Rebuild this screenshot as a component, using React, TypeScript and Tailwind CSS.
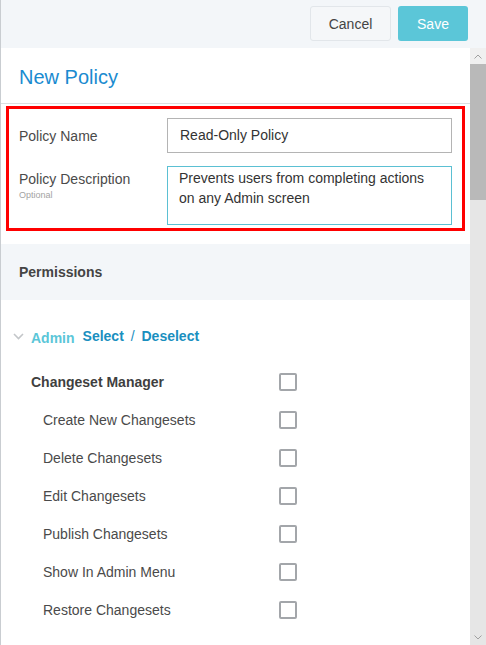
import React from "react";

const subItems = [
  "Create New Changesets",
  "Delete Changesets",
  "Edit Changesets",
  "Publish Changesets",
  "Show In Admin Menu",
  "Restore Changesets",
];

const Checkbox = () => (
  <span className="block w-[18px] h-[18px] border-2 border-[#a3a6aa] rounded-[2px] bg-white" />
);

export default function App() {
  return (
    <div
      className="w-[486px] h-[645px] flex flex-col border-l border-[#c9cdd1] bg-white overflow-hidden text-[14px] text-[#444]"
      style={{ fontFamily: '"Liberation Sans", Arial, sans-serif' }}
    >
      {/* Top action bar */}
      <div className="h-[48px] shrink-0 bg-[#f3f6f9] flex items-start justify-end gap-[7px] pt-[6px] pr-[18px]">
        <button className="w-[81px] h-[35px] pt-[2px] border border-[#e2e6ea] rounded-[3px] bg-[#f5f7f9] text-[#444]">
          Cancel
        </button>
        <button className="w-[70px] h-[35px] pt-[2px] rounded-[3px] bg-[#5bc6d8] text-white">
          Save
        </button>
      </div>

      <div className="flex flex-1 min-h-0">
        {/* Main content */}
        <div className="flex-1 min-w-0 flex flex-col">
          <div className="h-[56px] shrink-0 flex items-center pl-[18px] pt-[2px] border-b border-[#dcdfe2]">
            <h1 className="text-[20px] text-[#1a8bd0] leading-none">New Policy</h1>
          </div>

          <div className="ml-[5px] mr-[5px] mt-[2px] border-[3px] border-[#ff0000] pl-[10px] pr-[10px] pt-[9px] pb-[3px]">
            <div className="flex items-center h-[35px]">
              <label className="w-[148px] shrink-0 pt-[2px] text-[#4a4a4a]">Policy Name</label>
              <div className="flex-1 h-[35px] border border-[#b4b4b4] flex items-center px-[12px] text-[#333]">
                Read-Only Policy
              </div>
            </div>
            <div className="flex items-start mt-[13px]">
              <div className="w-[148px] shrink-0 pt-[5px]">
                <div className="text-[#4a4a4a] leading-[16px]">Policy Description</div>
                <div className="text-[9px] text-[#a3a3a3] leading-[10px] mt-[3px]">Optional</div>
              </div>
              <div className="flex-1 h-[59px] border border-[#5bc0d3] px-[11px] pt-[1px] text-[#333] leading-[20px]">
                Prevents users from completing actions on any Admin screen
              </div>
            </div>
          </div>

          <div className="mt-[13px] h-[56px] shrink-0 bg-[#f3f6f9] flex items-center pl-[18px]">
            <span className="font-bold text-[#444]">Permissions</span>
          </div>

          <div className="pt-[26px]">
            <div className="flex items-end h-[20px] pl-[12px]">
              <svg width="11" height="7" viewBox="0 0 11 7" className="mb-[6px] mr-[7px]">
                <path d="M1 1l4.5 4.5L10 1" fill="none" stroke="#c3c6c9" strokeWidth="1.6" />
              </svg>
              <span className="font-bold text-[#5bc6d8] leading-none mb-[1px]">Admin</span>
              <span className="ml-[8px] font-bold text-[#1a8fbf] leading-none mb-[3px]">
                Select <span className="mx-[3px] font-normal">/</span> Deselect
              </span>
            </div>

            <div className="mt-[17px]">
              <div className="h-[38px] flex items-center pl-[30px]">
                <span className="w-[248px] font-bold text-[#3f3f3f]">Changeset Manager</span>
                <Checkbox />
              </div>
              {subItems.map((item) => (
                <div key={item} className="h-[38px] flex items-center pl-[42px]">
                  <span className="w-[236px] text-[#4a4a4a]">{item}</span>
                  <Checkbox />
                </div>
              ))}
            </div>
          </div>
        </div>

        {/* Scrollbar */}
        <div className="w-[16px] shrink-0 bg-[#e6e6e6] flex flex-col">
          <div className="h-[16px] bg-[#f0f0f0] flex items-center justify-center">
            <svg width="8" height="5" viewBox="0 0 8 5">
              <path d="M0.5 4.5L4 1l3.5 3.5" fill="none" stroke="#a0a0a0" strokeWidth="1" />
            </svg>
          </div>
          <div className="h-[136px] bg-[#b9b9b9]" />
          <div className="flex-1" />
          <div className="h-[16px] flex items-center justify-center">
            <svg width="8" height="5" viewBox="0 0 8 5">
              <path d="M0.5 0.5L4 4l3.5-3.5" fill="none" stroke="#a0a0a0" strokeWidth="1" />
            </svg>
          </div>
        </div>
      </div>
    </div>
  );
}
